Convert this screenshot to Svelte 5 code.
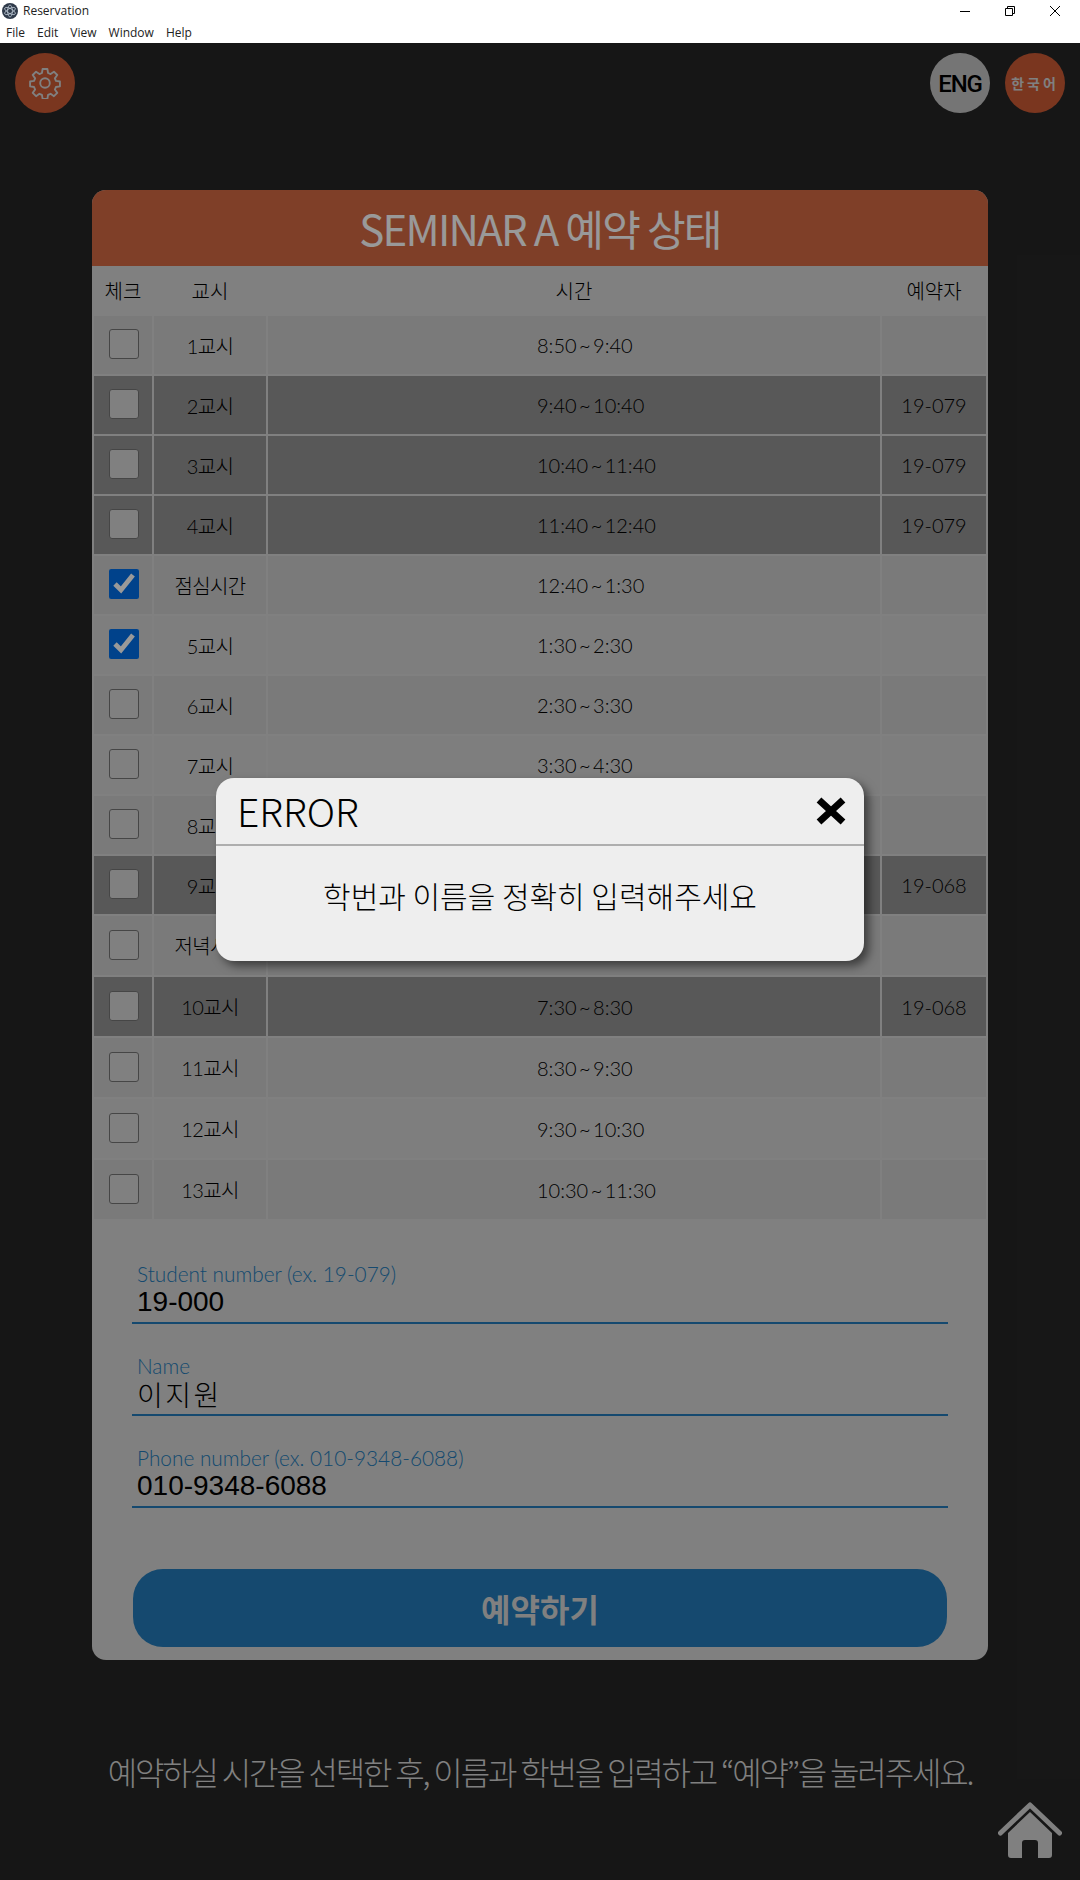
<script>
	// 예약 상태 table rows; `by` is the student who already booked the slot
	const rows = [
		{ name: '1교시', time: '8:50 ~ 9:40', by: '' },
		{ name: '2교시', time: '9:40 ~ 10:40', by: '19-079' },
		{ name: '3교시', time: '10:40 ~ 11:40', by: '19-079' },
		{ name: '4교시', time: '11:40 ~ 12:40', by: '19-079' },
		{ name: '점심시간', time: '12:40 ~ 1:30', by: '', on: true },
		{ name: '5교시', time: '1:30 ~ 2:30', by: '', on: true },
		{ name: '6교시', time: '2:30 ~ 3:30', by: '' },
		{ name: '7교시', time: '3:30 ~ 4:30', by: '' },
		{ name: '8교시', time: '4:30 ~ 5:30', by: '' },
		{ name: '9교시', time: '5:30 ~ 6:30', by: '19-068' },
		{ name: '저녁시간', time: '6:30 ~ 7:30', by: '' },
		{ name: '10교시', time: '7:30 ~ 8:30', by: '19-068' },
		{ name: '11교시', time: '8:30 ~ 9:30', by: '' },
		{ name: '12교시', time: '9:30 ~ 10:30', by: '' },
		{ name: '13교시', time: '10:30 ~ 11:30', by: '' }
	];

	const fields = [
		{ label: 'Student number (ex. 19-079)', value: '19-000' },
		{ label: 'Name', value: '이지원', kr: true },
		{ label: 'Phone number (ex. 010-9348-6088)', value: '010-9348-6088' }
	];

	const menu = ['File', 'Edit', 'View', 'Window', 'Help'];
</script>

<div class="titlebar">
	<div class="title-row">
		<svg class="app-icon" viewBox="0 0 16 16">
			<circle cx="8" cy="8" r="8" fill="#2f3a4a" />
			<g fill="none" stroke="#b8c4d0" stroke-width="0.8">
				<ellipse cx="8" cy="8" rx="6" ry="2.4" transform="rotate(30 8 8)" />
				<ellipse cx="8" cy="8" rx="6" ry="2.4" transform="rotate(90 8 8)" />
				<ellipse cx="8" cy="8" rx="6" ry="2.4" transform="rotate(150 8 8)" />
			</g>
		</svg>
		<span>Reservation</span>
		<div class="win-controls">
			<svg viewBox="0 0 10 10"><path d="M0 5.5h10" /></svg>
			<svg viewBox="0 0 10 10"><path d="M.5 2.5h7v7h-7zM2.5 2.5v-2h7v7h-2" /></svg>
			<svg viewBox="0 0 10 10"><path d="M0 0l10 10M10 0L0 10" /></svg>
		</div>
	</div>
	<div class="menu">
		{#each menu as item}
			<span>{item}</span>
		{/each}
	</div>
</div>

<main class="page">
	<div class="topbar">
		<button class="round orange" aria-label="settings">
			<svg class="gear" viewBox="0 0 24 24" fill="none" stroke="#d5d5d5" stroke-width="1.4" stroke-linejoin="round">
				<circle cx="12" cy="12" r="3.6" />
				<path d="M10.2 1.5h3.6l.5 3 1.9.8 2.5-1.8 2.5 2.500-1.800 2.500.8 1.900 3 .5v3.600l-3 .5-.8 1.900 1.800 2.500-2.500 2.500-2.500-1.800-1.900.8-.5 3h-3.600l-.5-3-1.900-.8-2.500 1.800-2.500-2.500 1.800-2.500-.8-1.900-3-.5v-3.600l3-.5.8-1.900-1.800-2.500 2.500-2.500 2.500 1.800 1.900-.8z" />
			</svg>
		</button>
		<div class="langs">
			<button class="round grey">ENG</button>
			<button class="round orange small">한국어</button>
		</div>
	</div>

	<section class="card">
		<h1>SEMINAR A 예약 상태</h1>
		<table>
			<thead>
				<tr>
					<th class="c1">체크</th>
					<th class="c2">교시</th>
					<th>시간</th>
					<th class="c4">예약자</th>
				</tr>
			</thead>
			<tbody>
				{#each rows as row, i}
					<tr class:booked={row.by} class:tall={i >= 10}>
						<td><input type="checkbox" checked={row.on} /></td>
						<td class="name">{row.name}</td>
						<td class="time">{row.time}</td>
						<td>{row.by}</td>
					</tr>
				{/each}
			</tbody>
		</table>

		<form class="form">
			{#each fields as field}
				<label class="field">
					<span>{field.label}</span>
					<input type="text" class:kr={field.kr} value={field.value} />
				</label>
			{/each}
			<button type="button" class="submit">예약하기</button>
		</form>
	</section>

	<p class="hint">예약하실 시간을 선택한 후, 이름과 학번을 입력하고 “예약”을 눌러주세요.</p>

	<svg class="home" viewBox="0 0 64 57">
		<path d="M2.500 31L32 3l29.500 28" fill="none" stroke="#d5d5d5" stroke-width="5" stroke-linecap="round" stroke-linejoin="round" />
		<path d="M32 10L54 31v22a3 3 0 0 1-3 3H40V41a3 3 0 0 0-3-3h-10a3 3 0 0 0-3 3v15H13a3 3 0 0 1-3-3V31z" fill="#d5d5d5" />
	</svg>

	<div class="overlay"></div>

	<div class="modal">
		<div class="modal-head">
			<span>ERROR</span>
			<svg viewBox="0 0 30 28"><path d="M3 3l24 22M27 3L3 25" fill="none" stroke="#000" stroke-width="7" /></svg>
		</div>
		<p>학번과 이름을 정확히 입력해주세요</p>
	</div>
</main>

<style>
	:global(body) {
		background: #262626;
		font-family: Lato, "Noto Sans CJK KR", sans-serif;
	}
	.titlebar {
		height: 43px;
		background: #fff;
		font-family: "Open Sans", "Noto Sans", sans-serif;
		font-size: 12px;
		color: #222;
	}
	.title-row {
		display: flex;
		align-items: center;
		height: 21px;
		padding-left: 2px;
		gap: 5px;
	}
	.app-icon {
		width: 16px;
		height: 16px;
	}
	.win-controls {
		display: flex;
		gap: 35px;
		margin-left: auto;
		padding-right: 20px;
	}
	.win-controls svg {
		width: 10px;
		height: 10px;
		fill: none;
		stroke: #000;
		stroke-width: 1;
	}
	.menu {
		display: flex;
		gap: 12px;
		padding-left: 6px;
		height: 22px;
		align-items: center;
	}
	.page {
		position: relative;
		height: 1837px;
		overflow: hidden;
		background: #262626;
	}
	.topbar {
		display: flex;
		justify-content: space-between;
		padding: 10px 15px 0;
		height: 147px;
		box-sizing: border-box;
	}
	.langs {
		display: flex;
		gap: 15px;
	}
	.round {
		width: 60px;
		height: 60px;
		border: 0;
		border-radius: 50%;
		padding: 0;
		display: flex;
		align-items: center;
		justify-content: center;
		font-family: Roboto, "Noto Sans CJK KR", sans-serif;
		font-size: 24px;
		font-weight: 500;
		letter-spacing: -1.2px;
	}
	.orange {
		background: #cc5a35;
		color: #d5d5d5;
	}
	.grey {
		background: #c4c4c4;
		color: #000;
		padding-top: 2px;
	}
	.small {
		font-size: 14px;
		font-weight: 700;
		letter-spacing: 3px;
	}
	.gear {
		width: 32px;
		height: 32px;
	}
	.card {
		width: 896px;
		height: 1470px;
		margin: 0 auto;
		background: #d5d5d5;
		border-radius: 14px;
		overflow: hidden;
	}
	h1 {
		margin: 0;
		height: 76px;
		line-height: 76px;
		background: #d46944;
		color: #fff;
		text-align: center;
		font-family: "Noto Sans CJK KR", sans-serif;
		font-size: 42px;
		font-weight: 400;
		letter-spacing: -1.7px;
	}
	table {
		width: 100%;
		table-layout: fixed;
		border-spacing: 2px;
		font-weight: 300;
		font-size: 20px;
		text-align: center;
		color: #000;
		margin-top: -2px;
	}
	th {
		height: 48px;
		padding: 0;
		font-size: 20px;
		font-weight: 300;
	}
	.c1 {
		width: 58px;
	}
	.c2 {
		width: 112px;
	}
	.c4 {
		width: 104px;
	}
	td {
		height: 58px;
		padding: 0;
		background: #cccccc;
	}
	.tall td {
		height: 59px;
	}
	tr:nth-child(even) td {
		background: #d3d3d3;
	}
	tr.booked td,
	tr.booked:nth-child(even) td {
		background: #939393;
	}
	td.name {
		letter-spacing: -0.6px;
	}
	td.time {
		text-align: left;
		padding-left: 269px;
		word-spacing: -3px;
	}
	td input {
		display: block;
		width: 30px;
		height: 30px;
		margin: -2px 0 0 15px;
		accent-color: #006fe8;
	}
	td input:not(:checked) {
		appearance: none;
		background: #d5d5d5;
		border: 1.5px solid #767676;
		border-radius: 3px;
		box-sizing: border-box;
	}
	.form {
		display: flex;
		flex-direction: column;
		padding: 0 40px;
		margin-top: 11px;
	}
	.field {
		display: flex;
		flex-direction: column;
		height: 92px;
		justify-content: flex-end;
		color: #237bb9;
		font-size: 20.8px;
		font-weight: 300;
		line-height: 22px;
	}
	.field span {
		padding-left: 5px;
	}
	.field input {
		background: none;
		border: 0;
		border-bottom: 2px solid #237bb9;
		outline: 0;
		padding: 0 0 3px 5px;
		height: 34px;
		color: #000;
		font-family: "Liberation Sans", "Noto Sans CJK KR", sans-serif;
		font-size: 28px;
		font-weight: 300;
	}
	.field input.kr {
		letter-spacing: 2.5px;
	}
	.submit {
		margin: 61px 1px 0;
		height: 78px;
		background: #237bb9;
		border: 0;
		border-radius: 30px;
		color: #d5d5d5;
		font-family: "Noto Sans CJK KR", sans-serif;
		font-size: 32px;
		font-weight: 700;
	}
	.hint {
		margin: 88px 0 0;
		text-align: center;
		color: #d5d5d5;
		font-family: "Noto Sans CJK KR", sans-serif;
		font-size: 32px;
		font-weight: 300;
		letter-spacing: -2.15px;
	}
	.home {
		position: absolute;
		right: 18px;
		bottom: 21px;
		width: 64px;
		height: 57px;
	}
	.overlay {
		position: absolute;
		inset: 0;
		background: rgba(0, 0, 0, 0.4);
	}
	.modal {
		position: absolute;
		left: 216px;
		top: 735px;
		width: 648px;
		height: 183px;
		background: #eee;
		border-radius: 18px;
		box-shadow: 5px 5px 10px rgba(0, 0, 0, 0.5);
		font-family: "Noto Sans CJK KR", sans-serif;
		font-weight: 300;
		color: #000;
	}
	.modal-head {
		display: flex;
		align-items: center;
		justify-content: space-between;
		height: 64px;
		padding: 0 18px 2px 21px;
		border-bottom: 2px solid #aeaeae;
		font-size: 39px;
	}
	.modal-head svg {
		width: 30px;
		height: 28px;
		margin-top: 2px;
	}
	.modal p {
		margin: 27px 0 0;
		text-align: center;
		font-size: 30px;
	}
</style>
